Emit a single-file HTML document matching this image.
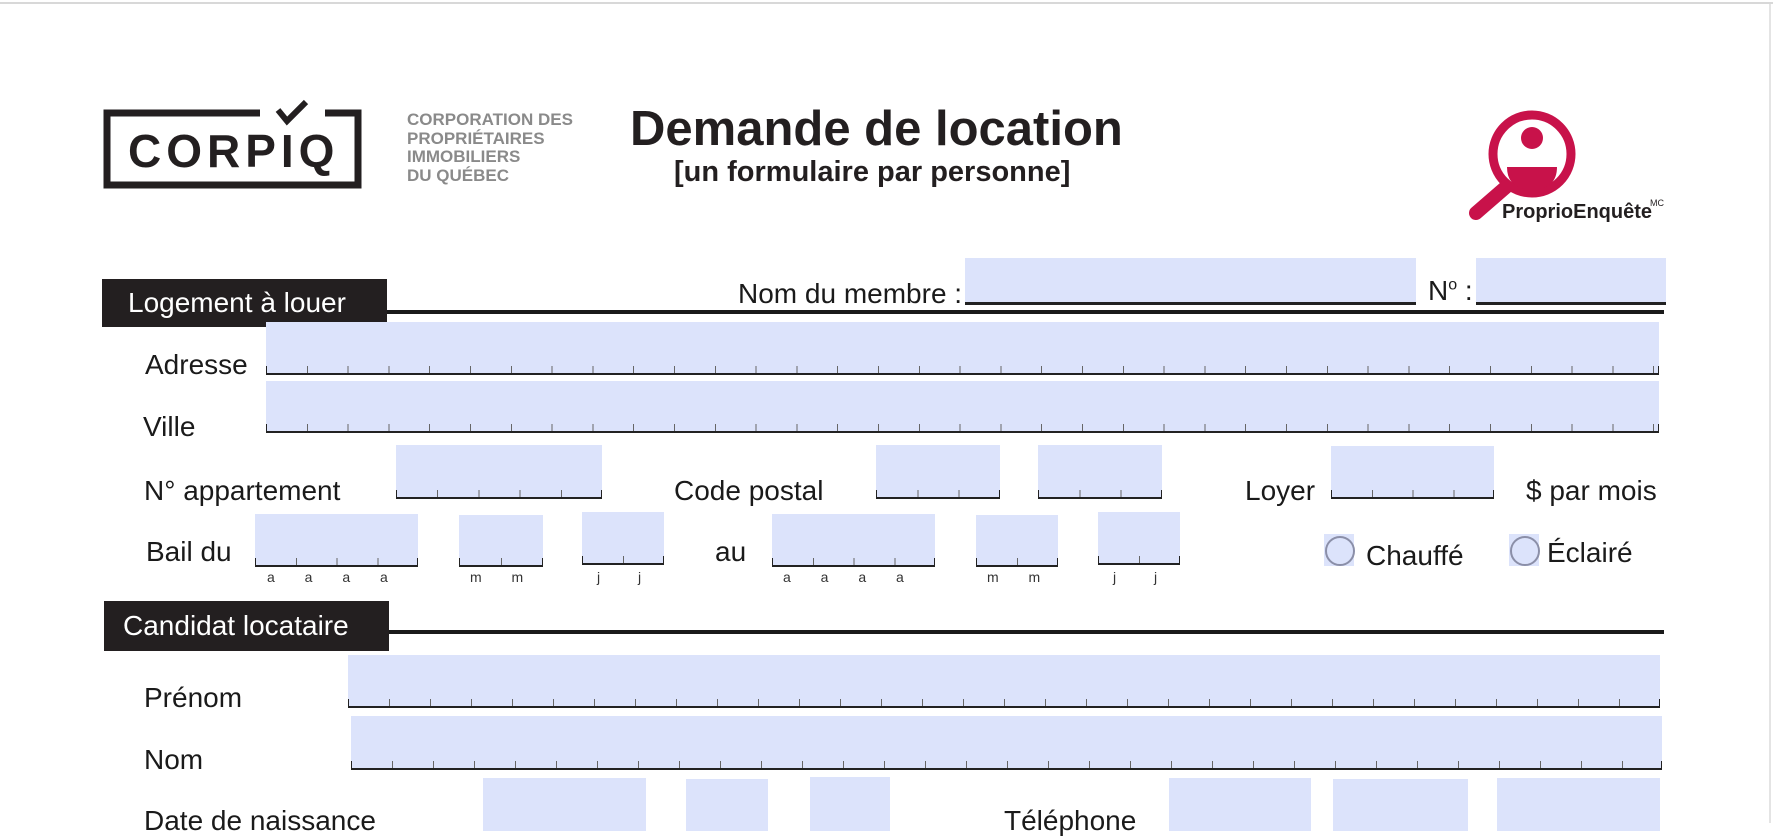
<!DOCTYPE html>
<html><head><meta charset="utf-8">
<style>
*{margin:0;padding:0;box-sizing:border-box}
body{width:1773px;height:823px;overflow:hidden;background:#fff;font-family:"Liberation Sans",Arial,sans-serif;color:#1a1a1a;position:relative}
.a{position:absolute;white-space:nowrap}
.lbl{position:absolute;font-size:28px;line-height:1;white-space:nowrap}
.f{position:absolute;background:#dce3fb}
.f .t{position:absolute;left:0;right:0;bottom:0;height:9px;border-left:1.5px solid #222;border-right:1.5px solid #222;border-bottom:2px solid #222;background:repeating-linear-gradient(to right,transparent 0,transparent calc(var(--s) - 1px),#666 calc(var(--s) - 1px),#666 var(--s))}
.u{position:absolute;background:#dce3fb;border-bottom:3px solid #222}
.hdr{position:absolute;background:#231f20;color:#fff;font-size:28px;line-height:1}
.hl{position:absolute;height:4px;background:#1a1a1a}
.sm{position:absolute;font-size:14px;color:#333}
.rad{position:absolute;width:30px;height:32px;background:#dce3fb}
.rad::after{content:'';position:absolute;left:1px;top:2px;width:26px;height:26px;border:2px solid #8b8fa8;border-radius:50%}
</style></head><body>
<div class="a" style="left:0;top:2px;width:1773px;height:2px;background:#d8d8d8"></div>
<div class="a" style="left:1769px;top:4px;width:2px;height:819px;background:#e4e4e4"></div>

<!-- CORPIQ logo -->
<svg class="a" style="left:100px;top:98px" width="268" height="94" viewBox="0 0 268 94">
<path d="M160 15 H7 V87 H258 V15 H225" fill="none" stroke="#231f20" stroke-width="7"/>
<path d="M178 12 L187 23 L206 4" fill="none" stroke="#231f20" stroke-width="6"/>
<text x="28" y="69" font-family="Liberation Sans" font-weight="bold" font-size="46" letter-spacing="5" fill="#231f20">CORPIQ</text>
</svg>
<div class="a" style="left:407px;top:111px;font-size:17px;line-height:18.6px;font-weight:bold;color:#8a8a8a">CORPORATION DES<br>PROPRIÉTAIRES<br>IMMOBILIERS<br>DU QUÉBEC</div>

<div class="a" style="left:630px;top:105px;font-size:49px;font-weight:bold;line-height:1;color:#231f20">Demande de location</div>
<div class="a" style="left:674px;top:158px;font-size:29px;font-weight:bold;line-height:1;color:#231f20">[un formulaire par personne]</div>

<!-- ProprioEnquête logo -->
<svg class="a" style="left:1462px;top:107px" width="220" height="125" viewBox="0 0 220 125">
<circle cx="70" cy="47" r="39" fill="none" stroke="#c8124a" stroke-width="9"/>
<circle cx="70" cy="31" r="11" fill="#c8124a"/>
<path d="M45 60 H95 Q95 82 70 83 Q45 82 45 60 Z" fill="#c8124a"/>
<path d="M44 80 L14 106" stroke="#c8124a" stroke-width="14" stroke-linecap="round"/>
<text x="40" y="111" font-family="Liberation Sans" font-weight="bold" font-size="20" fill="#231f20">ProprioEnquête</text>
<text x="188" y="99" font-family="Liberation Sans" font-size="9" fill="#231f20">MC</text>
</svg>

<!-- Section 1 -->
<div class="hdr" style="left:102px;top:279px;width:285px;height:48px;padding:10px 0 0 26px">Logement à louer</div>
<div class="hl" style="left:387px;top:310px;width:1277px"></div>
<div class="lbl" style="left:738px;top:280px">Nom du membre :</div>
<div class="u" style="left:965px;top:258px;width:451px;height:47px"></div>
<div class="lbl" style="left:1428px;top:277px">N<sup style="font-size:16px">o</sup> :</div>
<div class="u" style="left:1476px;top:258px;width:190px;height:47px"></div>
<div class="a" style="left:266px;top:322px;width:120px;height:5px;background:#8f92b4"></div>

<div class="lbl" style="left:145px;top:351px">Adresse</div>
<div class="f" style="left:266px;top:322px;width:1393px;height:53px;--s:40.8px"><div class="t"></div></div>
<div class="lbl" style="left:143px;top:413px">Ville</div>
<div class="f" style="left:266px;top:381px;width:1393px;height:52px;--s:40.8px"><div class="t"></div></div>

<div class="lbl" style="left:144px;top:477px">N° appartement</div>
<div class="f" style="left:396px;top:445px;width:206px;height:54px;--s:41.2px"><div class="t"></div></div>
<div class="lbl" style="left:674px;top:477px">Code postal</div>
<div class="f" style="left:876px;top:445px;width:124px;height:54px;--s:41.3px"><div class="t"></div></div>
<div class="f" style="left:1038px;top:445px;width:124px;height:54px;--s:41.3px"><div class="t"></div></div>
<div class="lbl" style="left:1245px;top:477px">Loyer</div>
<div class="f" style="left:1331px;top:446px;width:163px;height:53px;--s:40.8px"><div class="t"></div></div>
<div class="lbl" style="left:1526px;top:477px">$ par mois</div>

<div class="lbl" style="left:146px;top:538px">Bail du</div>
<div class="f" style="left:255px;top:514px;width:163px;height:53px;--s:40.8px"><div class="t"></div></div>
<div class="f" style="left:459px;top:515px;width:84px;height:52px;--s:42px"><div class="t"></div></div>
<div class="f" style="left:582px;top:512px;width:82px;height:53px;--s:41px"><div class="t"></div></div>
<div class="lbl" style="left:715px;top:538px">au</div>
<div class="f" style="left:772px;top:514px;width:163px;height:53px;--s:40.8px"><div class="t"></div></div>
<div class="f" style="left:976px;top:515px;width:82px;height:52px;--s:41px"><div class="t"></div></div>
<div class="f" style="left:1098px;top:512px;width:82px;height:53px;--s:41px"><div class="t"></div></div>
<div class="sm" style="left:267px;top:569px;word-spacing:26px">a a a a</div>
<div class="sm" style="left:470px;top:569px;word-spacing:26px">m m</div>
<div class="sm" style="left:597px;top:569px;word-spacing:34px">j j</div>
<div class="sm" style="left:783px;top:569px;word-spacing:26px">a a a a</div>
<div class="sm" style="left:987px;top:569px;word-spacing:26px">m m</div>
<div class="sm" style="left:1113px;top:569px;word-spacing:34px">j j</div>

<div class="rad" style="left:1324px;top:534px"></div>
<div class="lbl" style="left:1366px;top:542px">Chauffé</div>
<div class="rad" style="left:1509px;top:534px"></div>
<div class="lbl" style="left:1547px;top:539px">Éclairé</div>

<!-- Section 2 -->
<div class="hdr" style="left:104px;top:601px;width:285px;height:50px;padding:11px 0 0 19px">Candidat locataire</div>
<div class="hl" style="left:389px;top:630px;width:1275px"></div>

<div class="lbl" style="left:144px;top:684px">Prénom</div>
<div class="f" style="left:348px;top:655px;width:1312px;height:53px;--s:41px"><div class="t"></div></div>
<div class="lbl" style="left:144px;top:746px">Nom</div>
<div class="f" style="left:351px;top:716px;width:1311px;height:54px;--s:41px"><div class="t"></div></div>

<div class="lbl" style="left:144px;top:807px">Date de naissance</div>
<div class="f" style="left:483px;top:778px;width:163px;height:53px;--s:40.8px"></div>
<div class="f" style="left:686px;top:779px;width:82px;height:52px"></div>
<div class="f" style="left:810px;top:777px;width:80px;height:54px"></div>
<div class="lbl" style="left:1004px;top:807px">Téléphone</div>
<div class="f" style="left:1169px;top:778px;width:142px;height:53px"></div>
<div class="f" style="left:1333px;top:779px;width:135px;height:52px"></div>
<div class="f" style="left:1497px;top:778px;width:163px;height:53px"></div>
</body></html>
